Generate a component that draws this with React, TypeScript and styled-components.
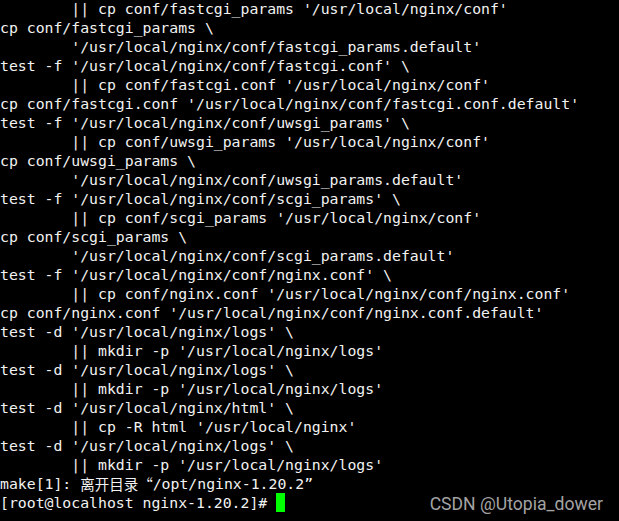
import React from "react";
import styled, { createGlobalStyle } from "styled-components";

const Global = createGlobalStyle`
  html, body {
    margin: 0;
    padding: 0;
    background: #000;
  }
  body {
    width: 619px;
    height: 521px;
    overflow: hidden;
  }
`;

const Terminal = styled.div`
  position: relative;
  width: 619px;
  height: 521px;
  background: #000;
  overflow: hidden;
  box-sizing: border-box;
`;

const Output = styled.div`
  display: flex;
  flex-direction: column;
  margin-top: -1px;
  font-family: "DejaVu Sans Mono", "Noto Sans CJK SC", monospace;
  font-size: 14.8px;
  line-height: 19px;
  color: #f2f2f2;
`;

const Line = styled.div`
  white-space: pre;
  height: 19px;
  display: flex;
  align-items: center;
`;

const Cjk = styled.span`
  font-family: "Noto Sans CJK SC", sans-serif;
  font-size: 14.5px;
`;

const Cursor = styled.span`
  display: inline-block;
  width: 9px;
  height: 19px;
  background: #00ff00;
`;

const Watermark = styled.div`
  position: absolute;
  right: 16px;
  bottom: 7px;
  font-family: Roboto, "Liberation Sans", sans-serif;
  font-size: 17.6px;
  color: #a3a3a3;
  white-space: nowrap;
`;

const T = "        ";

const lines: string[] = [
  `${T}|| cp conf/fastcgi_params '/usr/local/nginx/conf'`,
  `cp conf/fastcgi_params \\`,
  `${T}'/usr/local/nginx/conf/fastcgi_params.default'`,
  `test -f '/usr/local/nginx/conf/fastcgi.conf' \\`,
  `${T}|| cp conf/fastcgi.conf '/usr/local/nginx/conf'`,
  `cp conf/fastcgi.conf '/usr/local/nginx/conf/fastcgi.conf.default'`,
  `test -f '/usr/local/nginx/conf/uwsgi_params' \\`,
  `${T}|| cp conf/uwsgi_params '/usr/local/nginx/conf'`,
  `cp conf/uwsgi_params \\`,
  `${T}'/usr/local/nginx/conf/uwsgi_params.default'`,
  `test -f '/usr/local/nginx/conf/scgi_params' \\`,
  `${T}|| cp conf/scgi_params '/usr/local/nginx/conf'`,
  `cp conf/scgi_params \\`,
  `${T}'/usr/local/nginx/conf/scgi_params.default'`,
  `test -f '/usr/local/nginx/conf/nginx.conf' \\`,
  `${T}|| cp conf/nginx.conf '/usr/local/nginx/conf/nginx.conf'`,
  `cp conf/nginx.conf '/usr/local/nginx/conf/nginx.conf.default'`,
  `test -d '/usr/local/nginx/logs' \\`,
  `${T}|| mkdir -p '/usr/local/nginx/logs'`,
  `test -d '/usr/local/nginx/logs' \\`,
  `${T}|| mkdir -p '/usr/local/nginx/logs'`,
  `test -d '/usr/local/nginx/html' \\`,
  `${T}|| cp -R html '/usr/local/nginx'`,
  `test -d '/usr/local/nginx/logs' \\`,
  `${T}|| mkdir -p '/usr/local/nginx/logs'`,
];

export default function App() {
  return (
    <>
      <Global />
      <Terminal>
        <Output>
          {lines.map((l, i) => (
            <Line key={i}>{l}</Line>
          ))}
          <Line>
            {"make[1]: "}
            <Cjk>离开目录“</Cjk>
            {"/opt/nginx-1.20.2”"}
          </Line>
          <Line>
            {"[root@localhost nginx-1.20.2]# "}
            <Cursor />
          </Line>
        </Output>
        <Watermark>CSDN @Utopia_dower</Watermark>
      </Terminal>
    </>
  );
}
